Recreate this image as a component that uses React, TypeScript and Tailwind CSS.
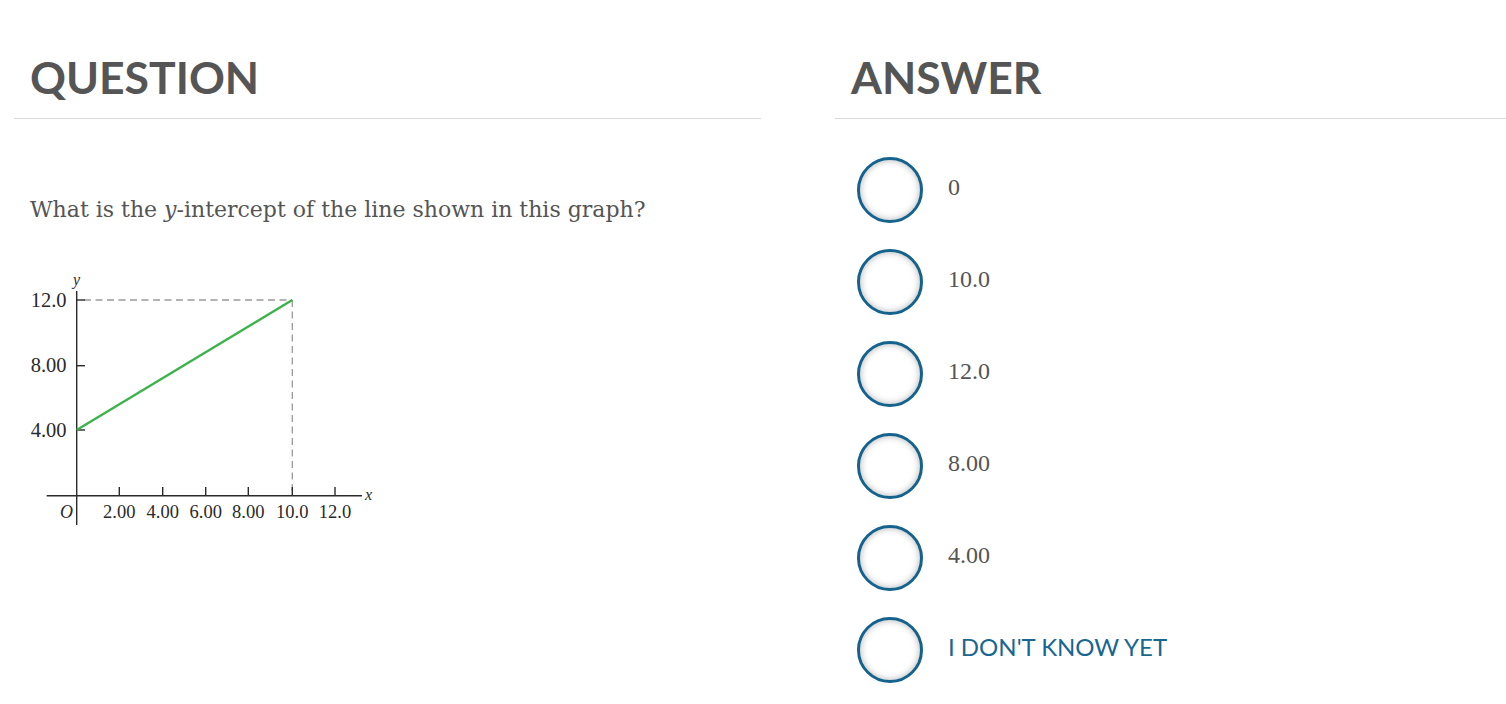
import React from "react";

const serif = { fontFamily: '"Liberation Serif", "Times New Roman", serif' };
const qserif = { fontFamily: '"DejaVu Serif", "Liberation Serif", serif' };
const lato = { fontFamily: 'Lato, "Open Sans", sans-serif' };

function Graph() {
  const xt = [99.3, 142.7, 185.7, 228.3, 272.3, 315];
  const xl = ["2.00", "4.00", "6.00", "8.00", "10.0", "12.0"];
  return (
    <svg width="380" height="280" viewBox="0 0 380 280" className="block">
      <g fontFamily='"Liberation Serif", "Times New Roman", serif' fill="#2a2a2a">
        <line x1="64" y1="40" x2="272.3" y2="40" stroke="#9a9a9a" strokeWidth="1.3" strokeDasharray="7 4.5" />
        <line x1="272.3" y1="40" x2="272.3" y2="235" stroke="#9a9a9a" strokeWidth="1.3" strokeDasharray="7 4.5" />
        <line x1="56.7" y1="31" x2="56.7" y2="265" stroke="#2a2a2a" strokeWidth="1.4" />
        <line x1="26.7" y1="235.7" x2="342" y2="235.7" stroke="#2a2a2a" strokeWidth="1.4" />
        {[40, 105.7, 170].map((y) => (
          <line key={y} x1="56.7" y1={y} x2="65" y2={y} stroke="#2a2a2a" strokeWidth="1.4" />
        ))}
        {xt.map((x) => (
          <line key={x} x1={x} y1="227" x2={x} y2="235.7" stroke="#2a2a2a" strokeWidth="1.4" />
        ))}
        <line x1="56.7" y1="170" x2="272.3" y2="40" stroke="#3cb34a" strokeWidth="2.4" />
        <text x="46.5" y="46.5" fontSize="20.5" textAnchor="end">12.0</text>
        <text x="46.5" y="112" fontSize="20.5" textAnchor="end">8.00</text>
        <text x="46.5" y="176.5" fontSize="20.5" textAnchor="end">4.00</text>
        <text x="53" y="25" fontSize="16" fontStyle="italic">y</text>
        <text x="345" y="240" fontSize="16" fontStyle="italic">x</text>
        <text x="46.5" y="258" fontSize="18" fontStyle="italic" textAnchor="middle">O</text>
        {xt.map((x, i) => (
          <text key={x} x={x} y="258" fontSize="18.5" textAnchor="middle">{xl[i]}</text>
        ))}
      </g>
    </svg>
  );
}

function Radio({ children }: { children: React.ReactNode }) {
  return (
    <div className="flex items-center h-[66px]">
      <div className="w-[66px] h-[66px] rounded-full border-[3px] border-[#15628c] bg-white shadow-[inset_0_0_7px_rgba(0,0,0,0.3)] shrink-0" />
      <div className="ml-[25px] -mt-[6px]">{children}</div>
    </div>
  );
}

export default function App() {
  const answers = ["0", "10.0", "12.0", "8.00", "4.00"];
  return (
    <div className="w-[1506px] h-[704px] bg-white flex overflow-hidden">
      <div className="ml-[14px] w-[747px] shrink-0">
        <div className="pt-[54px] pb-[18px] pl-[16px] border-b border-[#dadada]">
          <h2 className="text-[44.5px] leading-[46px] font-bold text-[#555555]" style={lato}>
            QUESTION
          </h2>
        </div>
        <p className="mt-[75px] pl-[16px] text-[22px] leading-[32px] text-[#555555]" style={qserif}>
          What is the <i>y</i>-intercept of the line shown in this graph?
        </p>
        <div className="mt-[34px] ml-[6px]">
          <Graph />
        </div>
      </div>
      <div className="ml-[74px] flex-1">
        <div className="pt-[54px] pb-[18px] pl-[16px] border-b border-[#dadada]">
          <h2 className="text-[44.5px] leading-[46px] font-bold text-[#555555]" style={lato}>
            ANSWER
          </h2>
        </div>
        <div className="mt-[38px] ml-[22px] flex flex-col gap-[26px]">
          {answers.map((a) => (
            <Radio key={a}>
              <span className="text-[24px] leading-[32px] text-[#555555]" style={serif}>
                {a}
              </span>
            </Radio>
          ))}
          <Radio>
            <span className="text-[24px] leading-[32px] text-[#19668f]" style={lato}>
              I DON'T KNOW YET
            </span>
          </Radio>
        </div>
      </div>
    </div>
  );
}
